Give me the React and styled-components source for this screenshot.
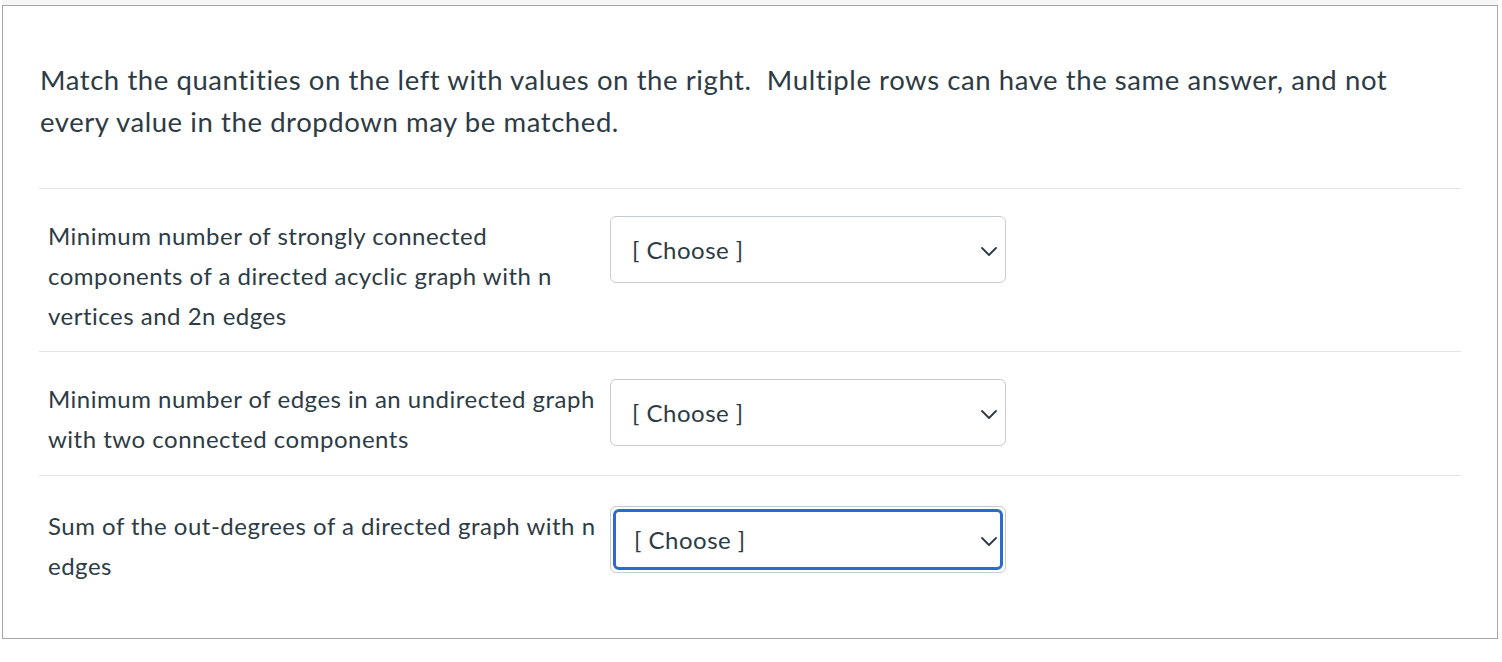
import { createGlobalStyle, styled } from 'styled-components';

const GlobalStyle = createGlobalStyle`
  html, body {
    margin: 0;
    padding: 0;
    background: #ffffff;
  }

  body {
    font-family: Lato, "Open Sans", "Liberation Sans", sans-serif;
    color: #2d3b45;
  }
`;

const Page = styled.main`
  padding: 0 4px 0 2px;
`;

const TopStrip = styled.div`
  height: 5px;
  background: #f5f5f5;
`;

const QuestionCard = styled.section`
  border: 1px solid #a6a6a6;
  padding: 0 36px 52px;
  background: #ffffff;
`;

const Prompt = styled.p`
  margin: 53px 0 45px;
  padding: 0 12px 0 1px;
  font-size: 27.5px;
  line-height: 42px;
  letter-spacing: 0.58px;
`;

const AnswerList = styled.div`
  border-top: 1px solid #e2e4e6;
`;

const AnswerRow = styled.div`
  display: grid;
  grid-template-columns: 562px 396px;
  align-items: start;
  padding: ${({ $top }) => $top}px 0 ${({ $bottom }) => $bottom}px 9px;
  border-bottom: ${({ $last }) => ($last ? 'none' : '1px solid #e2e4e6')};
`;

const Quantity = styled.div`
  font-size: 24px;
  line-height: 40px;
  letter-spacing: 0.5px;
  padding-right: 8px;
`;

const SelectWrap = styled.div`
  position: relative;
  height: 67px;
  box-sizing: border-box;
  border: 1px solid #c7cdd1;
  border-radius: 6px;
  background: #ffffff;
  padding: ${({ $focused }) => ($focused ? '2px' : '0')};
`;

const Choice = styled.div`
  height: 100%;
  box-sizing: border-box;
  display: flex;
  align-items: center;
  padding-left: ${({ $focused }) => ($focused ? '18px' : '21px')};
  font-size: 24px;
  letter-spacing: 0.5px;
  border: ${({ $focused }) => ($focused ? '3px solid #2b6bd1' : 'none')};
  border-radius: 6px;
`;

const Chevron = styled.svg`
  position: absolute;
  right: 8px;
  top: 50%;
  width: 16px;
  height: 9px;
  margin-top: -3px;
`;

const rows = [
  {
    text: 'Minimum number of strongly connected components of a directed acyclic graph with n vertices and 2n edges',
    top: 27,
    bottom: 15,
  },
  {
    text: 'Minimum number of edges in an undirected graph with two connected components',
    top: 27,
    bottom: 16,
  },
  {
    text: 'Sum of the out-degrees of a directed graph with n edges',
    top: 30,
    bottom: 0,
    focused: true,
  },
];

const App = () => (
  <>
    <GlobalStyle />
    <Page>
      <TopStrip />
      <QuestionCard>
        <Prompt>
          Match the quantities on the left with values on the right.&nbsp; Multiple rows can have the
          same answer, and not every value in the dropdown may be matched.
        </Prompt>
        <AnswerList>
          {rows.map((row, i) => (
            <AnswerRow key={i} $top={row.top} $bottom={row.bottom} $last={i === rows.length - 1}>
              <Quantity>{row.text}</Quantity>
              <SelectWrap $focused={row.focused}>
                <Choice $focused={row.focused}>[ Choose ]</Choice>
                <Chevron viewBox="0 0 16 9" fill="none">
                  <path d="M1 1l7 7 7-7" stroke="#2d3b45" strokeWidth="1.8" strokeLinecap="round" strokeLinejoin="round" />
                </Chevron>
              </SelectWrap>
            </AnswerRow>
          ))}
        </AnswerList>
      </QuestionCard>
    </Page>
  </>
);

export default App;
